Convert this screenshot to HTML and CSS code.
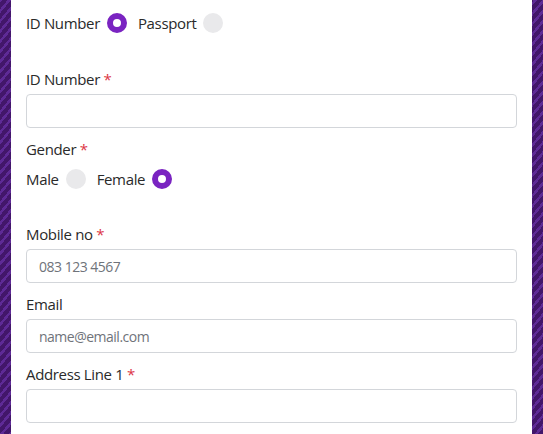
FILE: index.html
```html
<!DOCTYPE html>
<html lang="en">
<head>
<meta charset="utf-8">
<title>Form</title>
<link rel="stylesheet" href="styles.css">
</head>
<body>
<main class="panel">
  <div class="radio-row top-row">
    <label class="radio-opt"><span>ID Number</span><span class="radio checked"></span></label>
    <label class="radio-opt"><span>Passport</span><span class="radio"></span></label>
  </div>

  <div class="field">
    <div class="label">ID Number <span class="req">*</span></div>
    <div class="input"></div>
  </div>

  <div class="field">
    <div class="label">Gender <span class="req">*</span></div>
    <div class="radio-row gender-row">
      <label class="radio-opt"><span>Male</span><span class="radio"></span></label>
      <label class="radio-opt"><span>Female</span><span class="radio checked"></span></label>
    </div>
  </div>

  <div class="field">
    <div class="label">Mobile no <span class="req">*</span></div>
    <div class="input"><span class="placeholder">083 123 4567</span></div>
  </div>

  <div class="field">
    <div class="label">Email</div>
    <div class="input"><span class="placeholder">name@email.com</span></div>
  </div>

  <div class="field">
    <div class="label">Address Line 1 <span class="req">*</span></div>
    <div class="input"></div>
  </div>
</main>
</body>
</html>
```

FILE: styles.css
```css
html, body {
  margin: 0;
  padding: 0;
  height: 100%;
}

body {
  background: repeating-linear-gradient(
    -50deg,
    #42166a 0px,
    #42166a 4px,
    #5e2a96 4px,
    #5e2a96 6.5px
  );
  font-family: "Open Sans", "Noto Sans", sans-serif;
  font-size: 15px;
  letter-spacing: -0.35px;
  color: #2a2a2a;
  overflow: hidden;
}

.panel {
  background: #ffffff;
  margin: 0 11px;
  min-height: 100%;
  padding: 12px 15px 0 15px;
  box-sizing: border-box;
}

.radio-row {
  display: flex;
  align-items: center;
  height: 22px;
  gap: 11px;
}

.top-row {
  margin-bottom: 34px;
}

.gender-row {
  margin-top: 8px;
  margin-bottom: 33px;
}

.radio-opt {
  display: flex;
  align-items: center;
  gap: 7px;
  line-height: 22px;
}

.radio {
  width: 20px;
  height: 20px;
  border-radius: 50%;
  background: #e9e9eb;
  box-sizing: border-box;
  display: inline-block;
}

.radio.checked {
  background: #ffffff;
  border: 6px solid #7a24c1;
}

.field {
  margin-bottom: 10px;
}

.label {
  line-height: 22px;
  margin-bottom: 4px;
}

.req {
  color: #dc3545;
}

.input {
  height: 34px;
  border: 1px solid #d3d6da;
  border-radius: 4px;
  box-sizing: border-box;
  padding: 0 12px;
  display: flex;
  align-items: center;
  background: #fff;
}

.placeholder {
  color: #6f737a;
  font-size: 14px;
  letter-spacing: -0.5px;
}
```
